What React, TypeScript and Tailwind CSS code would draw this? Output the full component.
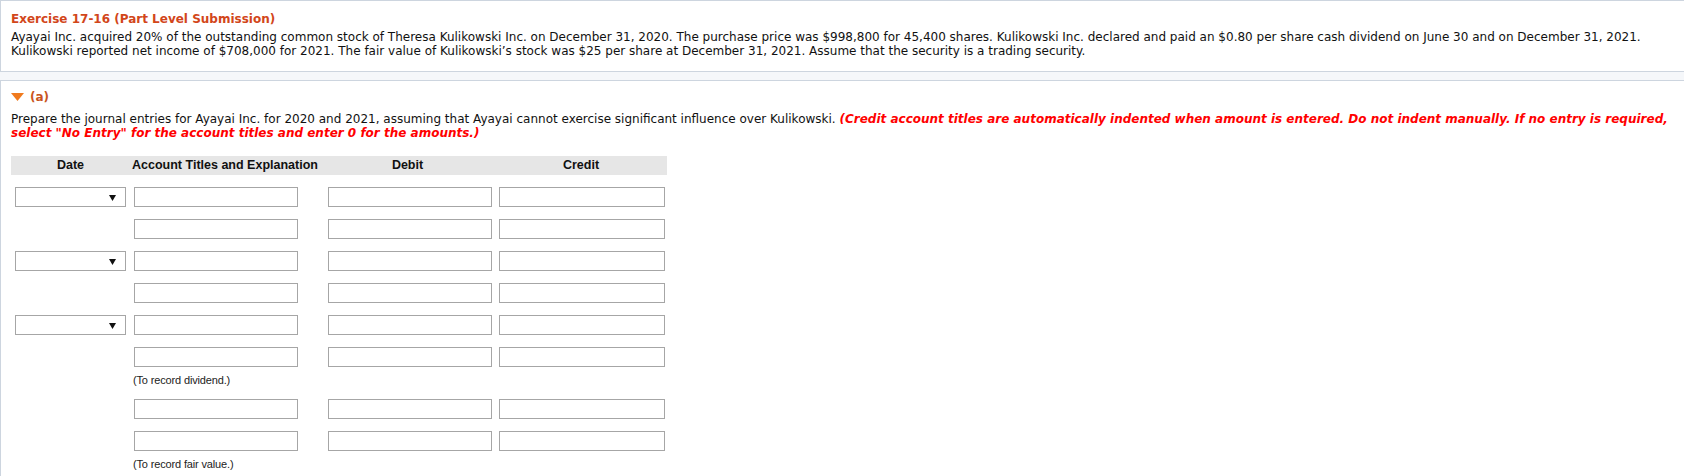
import React from "react";

const verdana = "font-['DejaVu_Sans',Verdana,sans-serif]";

function Select() {
  return (
    <div className="ml-[4px] w-[111px] h-[20px] border border-[#a6a6a6] bg-white flex items-center justify-end pr-[9px]">
      <svg width="7" height="7" viewBox="0 0 7 7"><polygon points="0,1 7,1 3.5,7" fill="#111" /></svg>
    </div>
  );
}

function Box({ cls }: { cls: string }) {
  return <div className={`${cls} h-[20px] border border-[#a6a6a6] bg-white`} />;
}

function Row({ date, note }: { date?: boolean; note?: string }) {
  return (
    <>
      <div className="h-[20px]">{date ? <Select /> : null}</div>
      <div className="h-[20px]"><Box cls="ml-[4px] w-[164px]" /></div>
      <div className="h-[20px]"><Box cls="ml-[8px] w-[164px]" /></div>
      <div className="h-[20px]"><Box cls="ml-[4px] w-[166px]" /></div>
      {note ? (
        <>
          <div />
          <div className="col-span-3 -mt-[6px] pl-[3px] font-['Liberation_Sans',Arial,sans-serif] text-[11px] tracking-[-0.15px] leading-[14px] text-[#222]">{note}</div>
        </>
      ) : null}
    </>
  );
}

export default function App() {
  return (
    <div className={`min-h-[476px] w-[1684px] overflow-hidden bg-[#f5f7fa] ${verdana}`}>
      <div className="bg-white border-t border-b border-l border-[#cdd5df] pl-[10px] pt-[10px] h-[72px]">
        <div className="text-[#d2461a] font-bold text-[12px] leading-[16px]">Exercise 17-16 (Part Level Submission)</div>
        <div className="mt-[3px] text-[12px] leading-[14px] text-[#111] whitespace-nowrap">
          Ayayai Inc. acquired 20% of the outstanding common stock of Theresa Kulikowski Inc. on December 31, 2020. The purchase price was $998,800 for 45,400 shares. Kulikowski Inc. declared and paid an $0.80 per share cash dividend on June 30 and on December 31, 2021.
          <br />
          Kulikowski reported net income of $708,000 for 2021. The fair value of Kulikowski’s stock was $25 per share at December 31, 2021. Assume that the security is a trading security.
        </div>
      </div>
      <div className="mt-[8px] bg-white border-t border-l border-[#cdd5df] pl-[10px] pt-[9px] pb-[10px]">
        <div className="flex items-center gap-[6px] h-[14px]">
          <svg width="13" height="8" viewBox="0 0 13 8"><polygon points="0,0 13,0 6.5,8" fill="#f07a1e" /></svg>
          <span className="text-[#c9551d] font-bold text-[12px] leading-[14px]">(a)</span>
        </div>
        <div className="mt-[8px] text-[12px] leading-[14px] text-[#111]">
          Prepare the journal entries for Ayayai Inc. for 2020 and 2021, assuming that Ayayai cannot exercise significant influence over Kulikowski.{" "}
          <span className="text-[#ff0000] font-bold italic">(Credit account titles are automatically indented when amount is entered. Do not indent manually. If no entry is required,</span>
          <br />
          <span className="text-[#ff0000] font-bold italic">select "No Entry" for the account titles and enter 0 for the amounts.)</span>
        </div>
        <div className="mt-[16px] w-[656px]">
          <div className="grid grid-cols-[119px_190px_175px_172px] bg-[#e6e6e6] h-[19px] items-center font-['Liberation_Sans',Arial,sans-serif] font-bold text-[12.5px] text-[#111]">
            <div className="text-center">Date</div>
            <div className="text-center">Account Titles and Explanation</div>
            <div className="text-center">Debit</div>
            <div className="text-center">Credit</div>
          </div>
          <div className="mt-[12px] grid grid-cols-[119px_190px_175px_172px] gap-y-[12px]">
            <Row date />
            <Row />
            <Row date />
            <Row />
            <Row date />
            <Row note="(To record dividend.)" />
            <Row />
            <Row note="(To record fair value.)" />
          </div>
        </div>
      </div>
    </div>
  );
}
